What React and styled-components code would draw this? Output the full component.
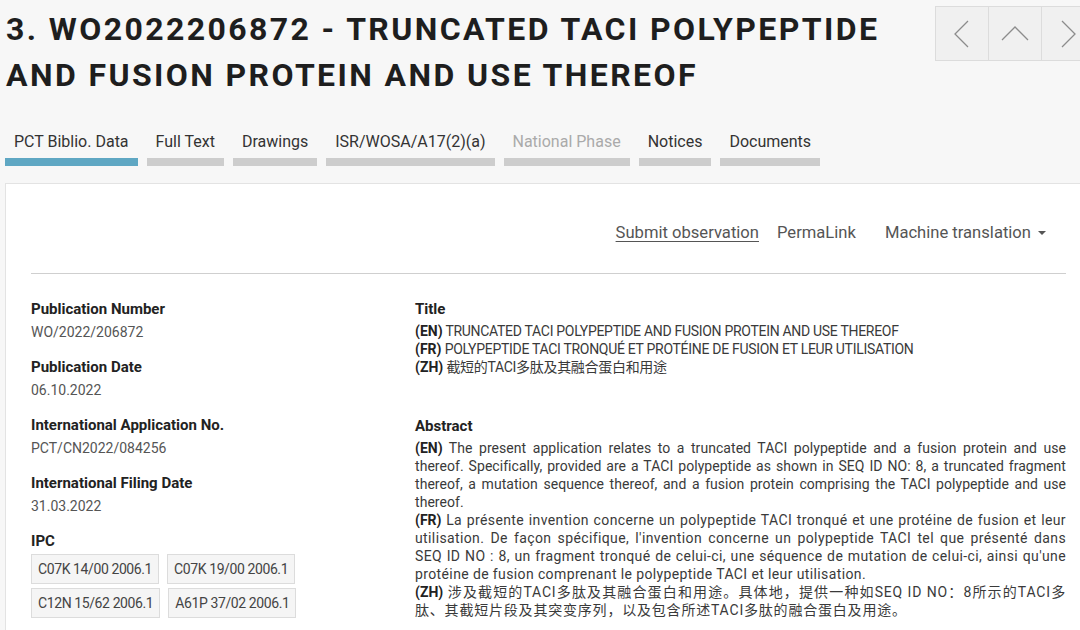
import styled, { createGlobalStyle } from "styled-components";

const GlobalStyle = createGlobalStyle`
    html, body {
        margin: 0;
        padding: 0;
        background: #f7f7f7;
        overflow: hidden;
    }
    body {
        font-family: Roboto, "Noto Sans CJK SC", sans-serif;
        color: #333;
    }
`

const tabs = [
    { label: "PCT Biblio. Data", active: true },
    { label: "Full Text" },
    { label: "Drawings" },
    { label: "ISR/WOSA/A17(2)(a)" },
    { label: "National Phase", disabled: true },
    { label: "Notices" },
    { label: "Documents" },
]

const fields = [
    { label: "Publication Number", value: "WO/2022/206872" },
    { label: "Publication Date", value: "06.10.2022" },
    { label: "International Application No.", value: "PCT/CN2022/084256" },
    { label: "International Filing Date", value: "31.03.2022" },
]

const ipc = ["C07K 14/00 2006.1", "C07K 19/00 2006.1", "C12N 15/62 2006.1", "A61P 37/02 2006.1"]

function Chevron({ dir }) {
    const d = {
        left: "M20 1 L7 14 L20 27",
        up: "M1 20 L14 7 L27 20",
        right: "M8 1 L21 14 L8 27",
    }[dir]
    return (
        <svg width="28" height="28" viewBox="0 0 28 28" fill="none" stroke="#8c8c8c" strokeWidth="1.3">
            <path d={d} />
        </svg>
    )
}

export default function App() {
    return (
        <Page>
            <GlobalStyle />
            <Header>
                <Title>3. WO2022206872 - TRUNCATED TACI POLYPEPTIDE AND FUSION PROTEIN AND USE THEREOF</Title>
                <NavGroup>
                    <NavButton><Chevron dir="left" /></NavButton>
                    <NavButton><Chevron dir="up" /></NavButton>
                    <NavButton><Chevron dir="right" /></NavButton>
                </NavGroup>
            </Header>

            <Tabs>
                {tabs.map((t) => (
                    <Tab key={t.label} $active={t.active} $disabled={t.disabled}>{t.label}</Tab>
                ))}
            </Tabs>

            <Card>
                <Toolbar>
                    <ToolLink $underline>Submit observation</ToolLink>
                    <ToolLink>PermaLink</ToolLink>
                    <ToolLink $wide>Machine translation <Caret /></ToolLink>
                </Toolbar>
                <Rule />
                <Columns>
                    <Left>
                        {fields.map((f) => (
                            <Field key={f.label}>
                                <Label>{f.label}</Label>
                                <Value>{f.value}</Value>
                            </Field>
                        ))}
                        <Field>
                            <Label>IPC</Label>
                            <Chips>
                                {ipc.map((c) => <Chip key={c}>{c}</Chip>)}
                            </Chips>
                        </Field>
                    </Left>
                    <Right>
                        <Section>
                            <Label>Title</Label>
                            <Text $spacing="-0.3px">
                                <Lang>(EN)</Lang> TRUNCATED TACI POLYPEPTIDE AND FUSION PROTEIN AND USE THEREOF<br />
                                <Lang>(FR)</Lang> POLYPEPTIDE TACI TRONQUÉ ET PROTÉINE DE FUSION ET LEUR UTILISATION<br />
                                <Lang>(ZH)</Lang> 截短的TACI多肽及其融合蛋白和用途
                            </Text>
                        </Section>
                        <Section>
                            <Label>Abstract</Label>
                            <Text $justify $spacing="0.05px">
                                <Lang>(EN)</Lang> The present application relates to a truncated TACI polypeptide and a fusion protein and use thereof. Specifically, provided are a TACI polypeptide as shown in SEQ ID NO: 8, a truncated fragment thereof, a mutation sequence thereof, and a fusion protein comprising the TACI polypeptide and use thereof.
                            </Text>
                            <Text $justify $spacing="0.38px">
                                <Lang>(FR)</Lang> La présente invention concerne un polypeptide TACI tronqué et une protéine de fusion et leur utilisation. De façon spécifique, l'invention concerne un polypeptide TACI tel que présenté dans SEQ ID NO : 8, un fragment tronqué de celui-ci, une séquence de mutation de celui-ci, ainsi qu'une protéine de fusion comprenant le polypeptide TACI et leur utilisation.
                            </Text>
                            <Text $justify $spacing="0.8px">
                                <Lang>(ZH)</Lang> 涉及截短的TACI多肽及其融合蛋白和用途。具体地，提供一种如SEQ ID NO：8所示的TACI多肽、其截短片段及其突变序列，以及包含所述TACI多肽的融合蛋白及用途。
                            </Text>
                        </Section>
                    </Right>
                </Columns>
            </Card>
        </Page>
    )
}

const Page = styled.div`
    width: 1087px;
    padding: 6px 0 0 5px;
`

const Header = styled.div`
    display: flex;
    justify-content: space-between;
    align-items: flex-start;
`

const Title = styled.h1`
    margin: 0 0 0 1px;
    width: 900px;
    font-family: Roboto, sans-serif;
    font-size: 32px;
    font-weight: 700;
    line-height: 46px;
    letter-spacing: 2.4px;
    color: #1e1e1e;
`

const NavGroup = styled.div`
    display: flex;
    margin-right: -3px;
`

const NavButton = styled.div`
    width: 52px;
    height: 53px;
    display: flex;
    align-items: center;
    justify-content: center;
    background: #f0f0f0;
    border: 1px solid #dcdcdc;
    margin-left: -1px;
`

const Tabs = styled.div`
    display: flex;
    gap: 9px;
    margin-top: 35px;
`

const Tab = styled.div`
    padding: 0 9px 7px;
    font-size: 16px;
    line-height: 18px;
    color: ${(p) => (p.$disabled ? "#aaa" : "#333")};
    border-bottom: 8px solid ${(p) => (p.$active ? "#5fa7c3" : "#cdcdcd")};
`

const Card = styled.div`
    margin-top: 17px;
    background: #fff;
    border: 1px solid #e3e3e3;
    padding: 0 25px 40px;
    height: 600px;
`

const Toolbar = styled.div`
    display: flex;
    justify-content: flex-end;
    align-items: center;
    gap: 18px;
    height: 81px;
    padding: 8px 20px 0 0;
`

const ToolLink = styled.span`
    font-size: 16.6px;
    color: #555;
    text-decoration: ${(p) => (p.$underline ? "underline" : "none")};
    text-underline-offset: 3px;
    margin-left: ${(p) => (p.$wide ? "11px" : "0")};
    display: inline-flex;
    align-items: center;
    gap: 7px;
`

const Caret = styled.span`
    width: 0;
    height: 0;
    border-left: 4px solid transparent;
    border-right: 4px solid transparent;
    border-top: 4px solid #555;
`

const Rule = styled.div`
    height: 1px;
    background: #cfcfcf;
`

const Columns = styled.div`
    display: flex;
    padding-top: 25px;
`

const Left = styled.div`
    width: 384px;
    flex: none;
    display: flex;
    flex-direction: column;
    gap: 15px;
`

const Right = styled.div`
    flex: 1;
    display: flex;
    flex-direction: column;
    gap: 40px;
`

const Field = styled.div``

const Section = styled.div``

const Label = styled.div`
    font-size: 15px;
    font-weight: 700;
    color: #222;
    line-height: 20px;
    margin-bottom: 3px;
`

const Value = styled.div`
    font-size: 14px;
    color: #555;
    line-height: 20px;
`

const Text = styled.div`
    font-size: 14px;
    line-height: 18px;
    color: #3a3a3a;
    letter-spacing: ${(p) => p.$spacing || "0"};
    text-align: ${(p) => (p.$justify ? "justify" : "left")};
`

const Lang = styled.span`
    font-weight: 700;
    color: #222;
    letter-spacing: 0;
`

const Chips = styled.div`
    display: flex;
    flex-wrap: wrap;
    gap: 4px 8px;
    width: 300px;
`

const Chip = styled.div`
    padding: 5px 6px;
    font-size: 14px;
    line-height: 18px;
    letter-spacing: -0.4px;
    color: #444;
    background: #f5f5f5;
    border: 1px solid #dcdcdc;
`
